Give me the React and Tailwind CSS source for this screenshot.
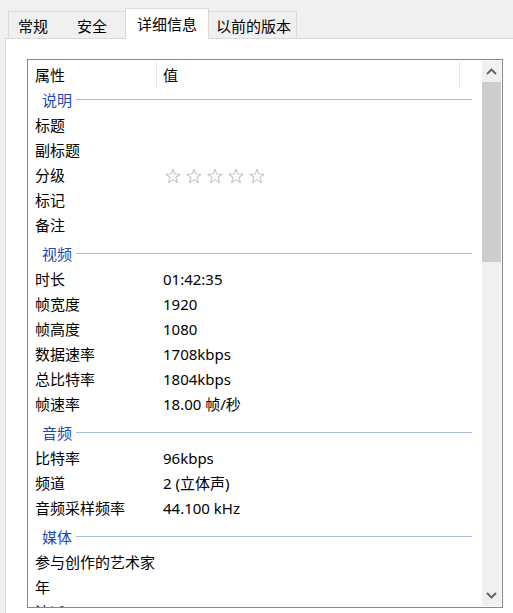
import React from "react";

const font = { fontFamily: '"Noto Sans", "Noto Sans CJK SC", sans-serif' };

const groups = [
  {
    name: "说明",
    items: [["标题", ""], ["副标题", ""], ["分级", "stars"], ["标记", ""], ["备注", ""]],
  },
  {
    name: "视频",
    items: [
      ["时长", "01:42:35"],
      ["帧宽度", "1920"],
      ["帧高度", "1080"],
      ["数据速率", "1708kbps"],
      ["总比特率", "1804kbps"],
      ["帧速率", "18.00 帧/秒"],
    ],
  },
  {
    name: "音频",
    items: [["比特率", "96kbps"], ["频道", "2 (立体声)"], ["音频采样频率", "44.100 kHz"]],
  },
  {
    name: "媒体",
    items: [["参与创作的艺术家", ""], ["年", ""], ["流派", ""], ["作者", ""]],
  },
];

const Star = () => (
  <svg width="16" height="16" viewBox="0 0 16 16" fill="none" stroke="#c4c4c4" strokeWidth="1.1" strokeLinejoin="round">
    <path d="M8 1.2 L9.9 6 L15 6.2 L11 9.4 L12.4 14.6 L8 11.6 L3.6 14.6 L5 9.4 L1 6.2 L6.1 6 Z" />
  </svg>
);

const Stars = () => (
  <div className="flex gap-[5px] pl-[2px]">
    {[0, 1, 2, 3, 4].map((i) => (
      <Star key={i} />
    ))}
  </div>
);

const Tab = ({ label, selected, className }) => (
  <div
    className={
      selected
        ? "relative z-10 -mb-[1px] h-[31px] bg-white border-x border-t border-[#d9d9d9] flex items-center " + className
        : "h-[27px] bg-[#f0f0f0] border-t border-[#d9d9d9] flex items-center pt-[3px] " + className
    }
  >
    {label}
  </div>
);

const Chevron = ({ up }) => (
  <svg width="11" height="7" viewBox="0 0 11 7" fill="none" stroke="#606060" strokeWidth="1.8">
    <polyline points={up ? "1,6 5.5,1.5 10,6" : "1,1 5.5,5.5 10,1"} />
  </svg>
);

export default function App() {
  return (
    <div className="w-[513px] h-[613px] bg-[#f0f0f0] overflow-hidden flex flex-col text-[15px] text-black" style={font}>
      {/* tabs */}
      <div className="flex items-end h-[30px] mt-[8px] pl-[8px] leading-none">
        <Tab label="常规" className="w-[60px] border-l pl-[9px]" />
        <Tab label="安全" className="w-[57px] pl-[9px]" />
        <Tab label="详细信息" selected className="w-[84px] pl-[11px]" />
        <Tab label="以前的版本" className="w-[88px] border-r pl-[7px]" />
      </div>

      {/* panel */}
      <div className="flex-1 ml-[5px] bg-white border-l border-t border-[#d9d9d9] pl-[21px] pt-[20px]">
        <div className="w-[476px] h-[549px] border border-[#878787] flex overflow-hidden">
          <div className="flex-1 flex flex-col overflow-hidden leading-none">
            {/* header */}
            <div className="h-[27px] flex items-center shrink-0">
              <div className="w-[128px] pl-[7px] pt-[3px]">属性</div>
              <div className="w-[1px] h-[25px] bg-[#e5e5e5] self-end" />
              <div className="w-[302px] pl-[6px] pt-[3px]">值</div>
              <div className="w-[1px] h-[25px] bg-[#e5e5e5] self-end" />
            </div>

            {groups.map((g, gi) => (
              <div key={g.name} className="shrink-0">
                <div className={gi === 0 ? "h-[25px] flex items-center" : "h-[29px] pt-[3px] flex items-center"}>
                  <span className="pl-[14px] pt-[2px] text-[#2447b0]">{g.name}</span>
                  <div className="flex-1 h-[1px] bg-[#a9bcdc] ml-[4px] mr-[10px]" />
                </div>
                {g.items.map(([k, v]) => (
                  <div key={k} className="h-[25px] flex items-center pt-[2px]">
                    <div className="w-[135px] pl-[7px] whitespace-nowrap">{k}</div>
                    <div className="whitespace-nowrap">{v === "stars" ? <Stars /> : v}</div>
                  </div>
                ))}
              </div>
            ))}
          </div>

          {/* scrollbar */}
          <div className="w-[19px] my-[1px] mr-[1px] bg-[#f0f0f0] flex flex-col">
            <div className="h-[21px] flex items-center justify-center">
              <Chevron up />
            </div>
            <div className="h-[180px] bg-[#cdcdcd]" />
            <div className="flex-1" />
            <div className="h-[21px] flex items-center justify-center">
              <Chevron />
            </div>
          </div>
        </div>
      </div>
    </div>
  );
}
